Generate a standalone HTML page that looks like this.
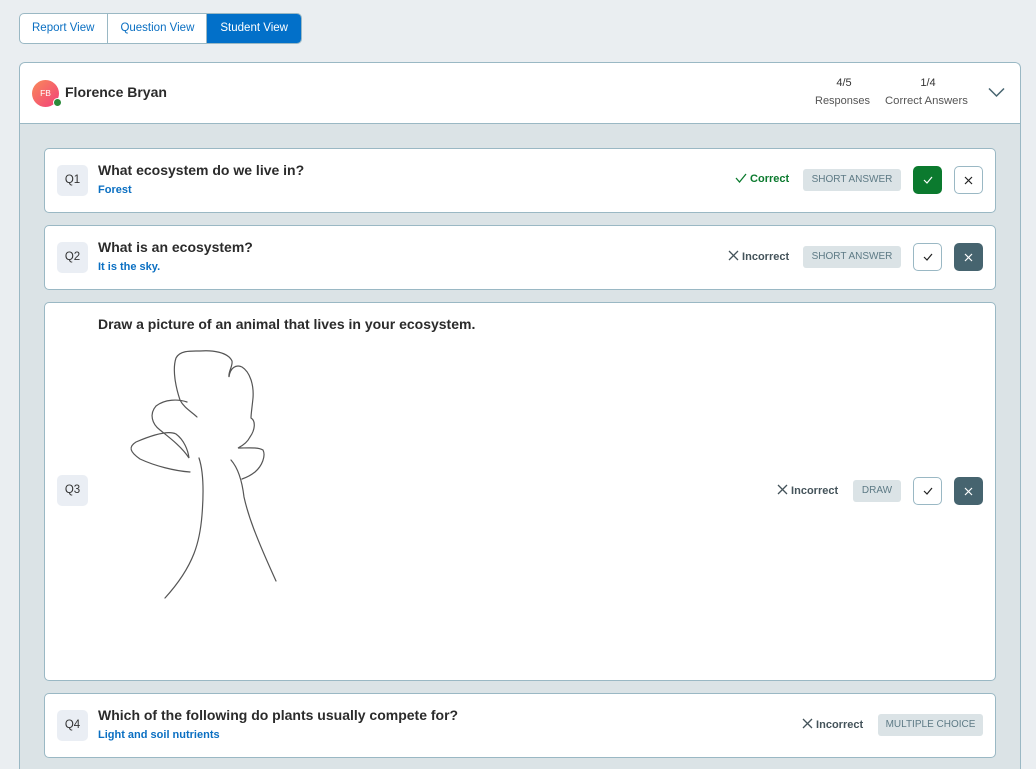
<!DOCTYPE html>
<html style="width:1036px;height:769px;overflow:hidden"><head><style>
*{box-sizing:border-box;margin:0;padding:0}
body{width:1036px;height:769px;background:#eaeef1;font-family:"Liberation Sans",sans-serif;position:relative;overflow:hidden;color:#2b2b2b}
.abs{position:absolute}
.tabs{left:19px;top:13px;height:31px;display:flex;border:1px solid #9ab8c4;border-radius:5px;overflow:hidden;background:#fff}
.tabs div{font-size:11.5px;color:#0a6fc2;padding:0 12px;line-height:29px}
.tabs div:first-child{padding:0 13px 0 12px}
.tabs div+div{border-left:1px solid #9ab8c4}
.tabs .on{background:#0270c9;color:#fff;padding:0 13px}
.outer{left:19px;top:62px;width:1002px;height:707px;background:#dbe3e6;border:1px solid #9ab8c4;border-bottom:none;border-radius:6px 6px 0 0;overflow:hidden}
.head{left:0;top:0;width:100%;height:61px;background:#fff;border-bottom:1px solid #9ab8c4}
.card{left:44px;width:952px;background:#fff;border:1px solid #9ab8c4;border-radius:5px}
.q{position:absolute;left:12px;width:31px;height:31px;background:#eaeef4;border-radius:5px;font-size:11.5px;text-align:center;line-height:31px;color:#333}
.t{position:absolute;left:53px;font-size:14px;font-weight:bold;color:#2b2b2b}
.a{position:absolute;left:53px;font-size:11px;font-weight:bold;color:#0a6fc2}
.st{position:absolute;font-size:11px;font-weight:bold;color:#44535a;white-space:nowrap}
.tag{position:absolute;height:22px;background:#dbe3e6;color:#5d7a85;font-size:10px;line-height:22px;text-align:center;border-radius:3px}
.b{position:absolute;width:29px;height:28px;border:1px solid #9ab8c4;border-radius:5px;background:#fff;display:flex;align-items:center;justify-content:center}
.b.g{background:#0b7a2e;border-color:#0b7a2e}
.b.d{background:#46646f;border-color:#46646f}
</style></head><body>
<div class="abs tabs"><div>Report View</div><div>Question View</div><div class="on">Student View</div></div>
<div class="abs outer">
 <div class="abs head">
  <div class="abs" style="left:12px;top:17px;width:27px;height:27px;border-radius:50%;background:linear-gradient(135deg,#f98a5a,#f23f7a);color:#fff;font-size:8.5px;text-align:center;line-height:27px">FB</div>
  <div class="abs" style="left:33px;top:35px;width:9px;height:9px;border-radius:50%;background:#2a8a3a;border:1.5px solid #fff"></div>
  <div class="abs" style="left:45px;top:21px;font-size:14px;font-weight:bold;color:#2b2b2b">Florence Bryan</div>
  <div class="abs" style="left:794px;top:14px;width:60px;text-align:center;font-size:11px;color:#333">4/5</div>
  <div class="abs" style="left:795px;top:32px;font-size:11px;color:#555">Responses</div>
  <div class="abs" style="left:878px;top:14px;width:60px;text-align:center;font-size:11px;color:#333">1/4</div>
  <div class="abs" style="left:865px;top:32px;font-size:11.3px;color:#555">Correct Answers</div>
  <svg class="abs" style="left:968px;top:24px" width="17" height="11"><path d="M1 1.5L8.5 9L16 1.5" fill="none" stroke="#46646f" stroke-width="1.5"/></svg>
 </div>
</div>
<!-- Q1 -->
<div class="abs card" style="top:148px;height:65px">
 <div class="q" style="top:16px">Q1</div>
 <div class="t" style="top:13px">What ecosystem do we live in?</div>
 <div class="a" style="top:35px">Forest</div>
 <div class="st" style="left:690px;top:24px;color:#0b7a2e"><svg width="12" height="10" style="vertical-align:-1px"><path d="M1 5L4.5 9L11 1" fill="none" stroke="#0b7a2e" stroke-width="1.3"/></svg> Correct</div>
 <div class="tag" style="left:758px;top:20px;width:98px">SHORT ANSWER</div>
 <div class="b g" style="left:868px;top:17px"><svg width="10" height="8"><path d="M1 4L4 7L9 1" fill="none" stroke="#fff" stroke-width="1.2"/></svg></div>
 <div class="b" style="left:909px;top:17px"><svg width="9" height="9"><path d="M1 1L8 8M8 1L1 8" stroke="#222" stroke-width="1.2"/></svg></div>
</div>
<!-- Q2 -->
<div class="abs card" style="top:225px;height:65px">
 <div class="q" style="top:16px">Q2</div>
 <div class="t" style="top:13px">What is an ecosystem?</div>
 <div class="a" style="top:35px">It is the sky.</div>
 <div class="st" style="left:683px;top:24px"><svg width="11" height="11" style="vertical-align:-1px"><path d="M1 1L10 10M10 1L1 10" stroke="#44535a" stroke-width="1.3"/></svg> Incorrect</div>
 <div class="tag" style="left:758px;top:20px;width:98px">SHORT ANSWER</div>
 <div class="b" style="left:868px;top:17px"><svg width="10" height="8"><path d="M1 4L4 7L9 1" fill="none" stroke="#222" stroke-width="1.2"/></svg></div>
 <div class="b d" style="left:909px;top:17px"><svg width="9" height="9"><path d="M1 1L8 8M8 1L1 8" stroke="#fff" stroke-width="1.2"/></svg></div>
</div>
<!-- Q3 -->
<div class="abs card" style="top:302px;height:379px">
 <div class="q" style="top:172px">Q3</div>
 <div class="t" style="top:13px">Draw a picture of an animal that lives in your ecosystem.</div>
 <div class="st" style="left:732px;top:181px"><svg width="11" height="11" style="vertical-align:-1px"><path d="M1 1L10 10M10 1L1 10" stroke="#44535a" stroke-width="1.3"/></svg> Incorrect</div>
 <div class="tag" style="left:808px;top:177px;width:48px">DRAW</div>
 <div class="b" style="left:868px;top:174px"><svg width="10" height="8"><path d="M1 4L4 7L9 1" fill="none" stroke="#222" stroke-width="1.2"/></svg></div>
 <div class="b d" style="left:909px;top:174px"><svg width="9" height="9"><path d="M1 1L8 8M8 1L1 8" stroke="#fff" stroke-width="1.2"/></svg></div>
</div>
<svg class="abs" style="left:0;top:0" width="1036" height="769" fill="none" stroke="#555" stroke-width="1.2" stroke-linecap="round">
 <path d="M197 417C192 412 184 408 180 400C176 388 172 370 176 358C180 350 192 351 200 351C212 350 228 352 232 361C233 366 228 372 229 377C230 368 236 364 242 367C250 372 254 385 253 398C252 408 251 414 251 418C256 421 255 430 250 437C247 443 242 446 238 448C248 448 258 447 263 450C266 456 262 466 255 472C250 476 245 478 242 479"/>
 <path d="M187 402C178 399 165 399 156 406C149 414 152 424 160 430C170 438 182 447 189 458C188 450 184 440 176 434C168 430 150 436 136 442C128 447 130 452 140 459C155 466 175 471 190 472"/>
 <path d="M199 458C203 470 204 490 202 515C200 540 195 565 165 598"/>
 <path d="M231 460C238 468 242 480 244 497C248 515 255 535 276 581"/>
</svg>
<!-- Q4 -->
<div class="abs card" style="top:693px;height:65px">
 <div class="q" style="top:16px">Q4</div>
 <div class="t" style="top:13px">Which of the following do plants usually compete for?</div>
 <div class="a" style="top:35px">Light and soil nutrients</div>
 <div class="st" style="left:757px;top:24px"><svg width="11" height="11" style="vertical-align:-1px"><path d="M1 1L10 10M10 1L1 10" stroke="#44535a" stroke-width="1.3"/></svg> Incorrect</div>
 <div class="tag" style="left:833px;top:20px;width:105px">MULTIPLE CHOICE</div>
</div>
</body></html>
